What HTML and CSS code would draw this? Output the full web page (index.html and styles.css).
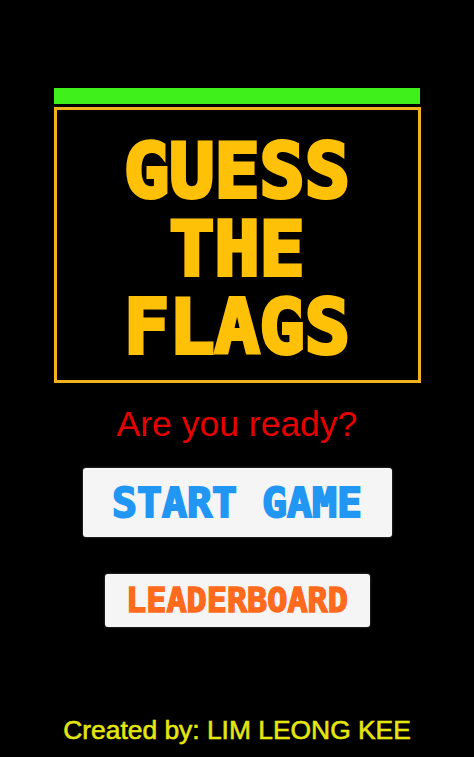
FILE: index.html
```html
<!DOCTYPE html>
<html lang="en">
<head>
<meta charset="utf-8">
<title>Guess the Flags</title>
<link rel="stylesheet" href="styles.css">
</head>
<body>
  <main class="screen">
    <div class="health-bar"></div>
    <div class="title-box">
      <h1 class="title">GUESS<br>THE<br>FLAGS</h1>
    </div>
    <p class="prompt">Are you ready?</p>
    <button class="btn btn-start" type="button">START GAME</button>
    <button class="btn btn-board" type="button">LEADERBOARD</button>
    <footer class="credit">Created by: LIM LEONG KEE</footer>
  </main>
</body>
</html>
```

FILE: styles.css
```css
html, body {
  margin: 0;
  padding: 0;
  background: #000;
  height: 100%;
}

.screen {
  display: flex;
  flex-direction: column;
  align-items: center;
  padding-top: 88px;
}

.health-bar {
  width: 366px;
  height: 16px;
  background: #3ff01a;
}

.title-box {
  box-sizing: border-box;
  width: 367px;
  margin-top: 3px;
  border: 3px solid #f2b21e;
  padding: 22px 0 14px;
}

/* heavy block lettering: bold mono thickened with a matching stroke */
.title {
  margin: 0;
  text-align: center;
  font-family: "DejaVu Sans Mono", monospace;
  font-weight: bold;
  font-size: 75px;
  line-height: 78px;
  color: #ffc107;
  -webkit-text-stroke: 4px #ffc107;
}

.prompt {
  margin: 21px 0 0;
  font-family: "Liberation Sans", Arial, sans-serif;
  font-size: 35.5px;
  line-height: 40px;
  color: #e60000;
}

.btn {
  display: block;
  border: none;
  border-radius: 3px;
  background: #f5f5f5;
  padding: 0;
  font-family: "DejaVu Sans Mono", monospace;
  font-weight: bold;
  cursor: pointer;
  box-shadow: 0 0 2px rgba(255, 255, 255, 0.4);
}

.btn-start {
  margin-top: 24px;
  width: 309px;
  height: 69px;
  font-size: 41.5px;
  line-height: 69px;
  color: #2196f3;
  -webkit-text-stroke: 2px #2196f3;
}

.btn-board {
  margin-top: 37px;
  width: 265px;
  height: 53px;
  font-size: 33.5px;
  line-height: 53px;
  color: #ff6a1c;
  -webkit-text-stroke: 1.5px #ff6a1c;
}

.credit {
  margin-top: 88px;
  font-family: "Liberation Sans", Arial, sans-serif;
  font-size: 26.4px;
  line-height: 30px;
  color: #e6e60f;
  -webkit-text-stroke: 0.6px #e6e60f;
}
```
